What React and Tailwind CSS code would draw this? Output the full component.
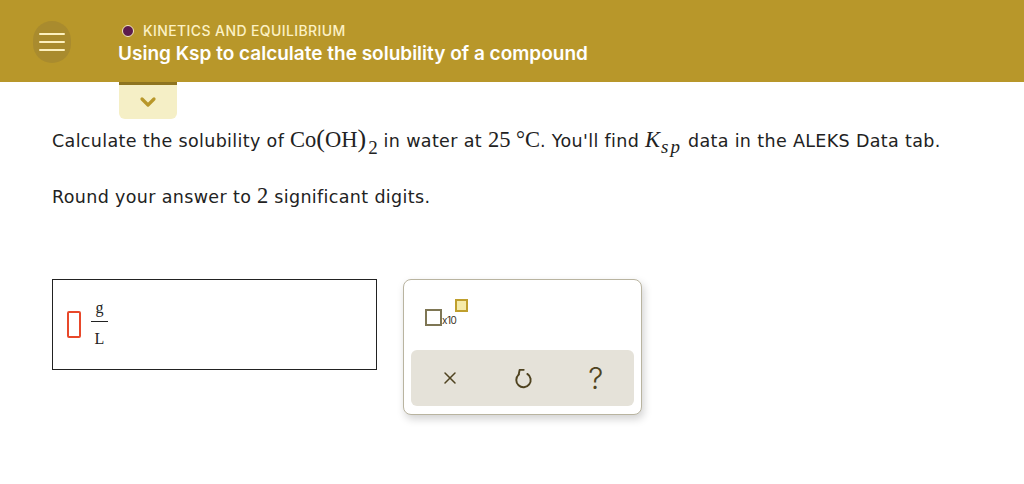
import { X } from 'lucide-react';

const serif = { fontFamily: '"Liberation Serif", "Times New Roman", serif' };

function MenuButton() {
  return (
    <div className="w-[38px] h-[42px] rounded-full bg-[#a98b2e] flex flex-col items-center justify-center gap-[6px]">
      <div className="w-[26px] h-[2px] bg-[#fdf1bf] rounded" />
      <div className="w-[26px] h-[2px] bg-[#fdf1bf] rounded" />
      <div className="w-[26px] h-[2px] bg-[#fdf1bf] rounded" />
    </div>
  );
}

function Header() {
  return (
    <div className="h-[82px] bg-[#b8972a] flex items-start pl-[33px]" style={{ fontFamily: 'Inter, "Open Sans", sans-serif' }}>
      <div className="mt-[21px]">
        <MenuButton />
      </div>
      <div className="ml-[47px] mt-[23px] flex flex-col">
        <div className="flex items-center gap-[9px] ml-[4px] text-[14px] leading-4 font-medium text-[#fcf1c4] tracking-[0.4px]">
          <span className="w-[12px] h-[12px] rounded-full bg-[#5c1b4c] border border-[#f4e8c0]" />
          KINETICS AND EQUILIBRIUM
        </div>
        <div className="mt-[3px] text-[19px] leading-6 font-semibold text-white">
          Using Ksp to calculate the solubility of a compound
        </div>
      </div>
    </div>
  );
}

function XTenIcon() {
  return (
    <div className="relative w-[50px] h-[30px]">
      <div className="absolute left-0 top-[10px] w-[17px] h-[17px] border-2 border-[#7e7654]" />
      <span className="absolute left-[17px] top-[15px] text-[10px] leading-3 text-[#3a3424] tracking-[-0.5px]" style={{ fontFamily: 'Inter, sans-serif' }}>x10</span>
      <div className="absolute left-[30px] top-0 w-[13px] h-[13px] border-2 border-[#bf9f2d] bg-[#f6eba9]" />
    </div>
  );
}

function UndoIcon() {
  return (
    <svg width="24" height="24" viewBox="0 0 20 20" fill="none" stroke="currentColor" strokeWidth="1.6" strokeLinecap="round" strokeLinejoin="round">
      <path d="M6.4 7.2 A6 6 0 1 0 13.6 6.6" />
      <path d="M10.6 3.2 H7.2 L6.4 7.2" />
    </svg>
  );
}

export default function App() {
  return (
    <div className="w-[1024px] h-[484px] bg-white overflow-hidden">
      <Header />
      <div className="ml-[119px] w-[58px] h-[37px] bg-[#f5efc6] rounded-b-[6px] border-t-[3px] border-[#8e7420] flex items-center justify-center">
        <svg width="20" height="14" viewBox="0 0 20 14" fill="none">
          <path d="M4 4 L10 10 L16 4" stroke="#b8972a" strokeWidth="3.2" strokeLinecap="round" strokeLinejoin="round" />
        </svg>
      </div>

      <div className="pl-[52px] text-[17.5px] text-[#222] tracking-[0.35px]" style={{ fontFamily: '"DejaVu Sans", Verdana, sans-serif' }}>
        <p className="mt-[6px] h-[28px] leading-[28px] flex items-baseline whitespace-nowrap">
          <span>Calculate the solubility of&nbsp;</span>
          <span style={serif} className="text-[22.5px] tracking-normal">
            Co<span className="text-[26px]">(</span>OH<span className="text-[26px]">)</span>
            <span className="text-[19px] relative top-[7px] ml-[2px]">2</span>
          </span>
          <span>&nbsp;in water at&nbsp;</span>
          <span style={serif} className="text-[22.5px] tracking-normal">25&nbsp;°C</span>
          <span>. You'll find&nbsp;</span>
          <span style={serif} className="text-[22.5px] italic tracking-normal">
            K<span className="text-[19px] relative top-[6px] ml-[1px] tracking-[2px]">sp</span>
          </span>
          <span>&nbsp;data in the ALEKS Data tab.</span>
        </p>
        <p className="mt-[29px] h-[28px] leading-[28px] flex items-baseline whitespace-nowrap">
          <span>Round your answer to&nbsp;</span>
          <span style={serif} className="text-[22.5px] tracking-normal">2</span>
          <span>&nbsp;significant digits.</span>
        </p>

        <div className="mt-[69px] flex items-start">
          <div className="w-[325px] h-[91px] border border-[#222] flex items-center pl-[14px]">
            <div className="w-[14px] h-[27px] border-2 border-[#e8482a] rounded-[2px]" />
            <div className="ml-[10px] flex flex-col items-center text-[16px] leading-4 text-[#222] tracking-normal" style={serif}>
              <span className="-mt-[2px]">g</span>
              <div className="w-[17px] h-[1.5px] bg-[#222] mt-[5px] mb-[9px]" />
              <span>L</span>
            </div>
          </div>

          <div className="ml-[26px] w-[239px] h-[136px] rounded-[8px] border border-[#b9b4a0] bg-white shadow-[2px_4px_8px_rgba(0,0,0,0.18)] px-[7px] pt-[19px]">
            <div className="pl-[14px]">
              <XTenIcon />
            </div>
            <div className="mt-[21px] h-[56px] rounded-[6px] bg-[#e5e2d9] flex items-center text-[#4f4320]">
              <div className="w-[78px] flex justify-center ml-[1px]">
                <X size={20} strokeWidth={1.8} />
              </div>
              <div className="w-[72px] flex justify-center">
                <UndoIcon />
              </div>
              <div className="w-[78px] flex justify-center text-[30px] leading-none" style={{ fontFamily: 'Inter, sans-serif', fontWeight: 300 }}>
                ?
              </div>
            </div>
          </div>
        </div>
      </div>
    </div>
  );
}
